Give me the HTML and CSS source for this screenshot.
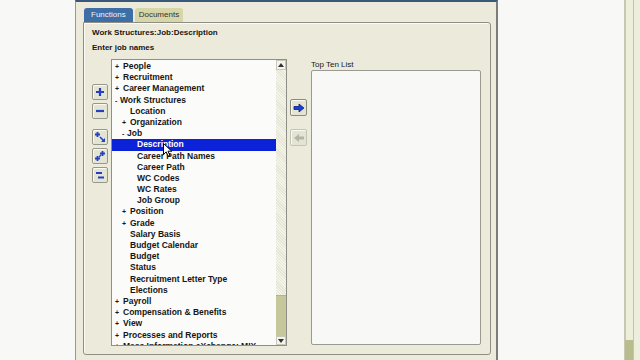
FILE: index.html
```html
<!DOCTYPE html>
<html lang="en">

<head>
  <meta charset="UTF-8">
  <title>Work Structures: Job: Description</title>
  <link rel="stylesheet" href="styles.css">
</head>

<body>
  <div class="gutter"></div>

  <div class="window">
    <div class="tabs">
      <div class="tab tab-active">Functions</div>
      <div class="tab">Documents</div>
    </div>

    <div class="tabpanel">
      <div class="title">Work Structures:Job:Description</div>
      <div class="prompt">Enter job names</div>

      <div class="picker">
        <div class="tools">
          <div class="tool">
            <svg width="10" height="10" viewBox="0 0 10 10"><path d="M5 1v8M1 5h8" stroke="#2340c4" stroke-width="2.2"/></svg>
          </div>
          <div class="tool">
            <svg width="10" height="10" viewBox="0 0 10 10"><path d="M1 5h8" stroke="#2340c4" stroke-width="2.2"/></svg>
          </div>
          <div class="tool tool-gap">
            <svg width="12" height="12" viewBox="0 0 12 12"><path d="M3.5 1v5M1 3.5h5" stroke="#2340c4" stroke-width="1.8"/><path d="M6 6l3.5 3.5" stroke="#2340c4" stroke-width="1.6"/><path d="M11 7v4H7z" fill="#2340c4"/></svg>
          </div>
          <div class="tool">
            <svg width="12" height="12" viewBox="0 0 12 12"><path d="M3.5 6v5M1 8.5h5M8.5 1v5M6 3.5h5" stroke="#2340c4" stroke-width="1.8"/><path d="M5 7l2-2" stroke="#2340c4" stroke-width="1.2"/></svg>
          </div>
          <div class="tool">
            <svg width="12" height="12" viewBox="0 0 12 12"><path d="M2 4h6M4 8.5h6" stroke="#2340c4" stroke-width="2"/></svg>
          </div>
        </div>

        <div class="tree">
          <ul class="nodes">
            <li class="l0"><span class="plus">+</span>People</li>
            <li class="l0"><span class="plus">+</span>Recruitment</li>
            <li class="l0"><span class="plus">+</span>Career Management</li>
            <li class="l0"><span class="minus">-</span>Work Structures</li>
            <li class="l1 leaf">Location</li>
            <li class="l1"><span class="plus">+</span>Organization</li>
            <li class="l1"><span class="minus">-</span>Job</li>
            <li class="l2 leaf selected">Description</li>
            <li class="l2 leaf">Career Path Names</li>
            <li class="l2 leaf">Career Path</li>
            <li class="l2 leaf">WC Codes</li>
            <li class="l2 leaf">WC Rates</li>
            <li class="l2 leaf">Job Group</li>
            <li class="l1"><span class="plus">+</span>Position</li>
            <li class="l1"><span class="plus">+</span>Grade</li>
            <li class="l1 leaf">Salary Basis</li>
            <li class="l1 leaf">Budget Calendar</li>
            <li class="l1 leaf">Budget</li>
            <li class="l1 leaf">Status</li>
            <li class="l1 leaf">Recruitment Letter Type</li>
            <li class="l1 leaf">Elections</li>
            <li class="l0"><span class="plus">+</span>Payroll</li>
            <li class="l0"><span class="plus">+</span>Compensation &amp; Benefits</li>
            <li class="l0"><span class="plus">+</span>View</li>
            <li class="l0"><span class="plus">+</span>Processes and Reports</li>
            <li class="l0"><span class="plus">+</span>Mass Information eXchange: MIX</li>
          </ul>
          <div class="scrollbar">
            <div class="scroll-btn">
              <svg width="6" height="4" viewBox="0 0 6 4"><path d="M0 4L3 0l3 4z" fill="#333"/></svg>
            </div>
            <div class="track"></div>
            <div class="thumb"></div>
            <div class="scroll-btn scroll-btn-down">
              <svg width="6" height="4" viewBox="0 0 6 4"><path d="M0 0h6L3 4z" fill="#333"/></svg>
            </div>
          </div>
          <svg class="cursor" width="10" height="14" viewBox="0 0 10 14"><path d="M.5.5v11l2.7-2.6 1.9 4.3 1.8-.8-1.9-4.2h3.8z" fill="#fff" stroke="#000" stroke-width="1"/></svg>
        </div>

        <div class="moves">
          <div class="move">
            <svg width="12" height="10" viewBox="0 0 12 10"><path d="M1 3.5h5V1l5 4-5 4V6.5H1z" fill="#1b3fd0" stroke="#0c1f80" stroke-width=".8"/></svg>
          </div>
          <div class="move move-off">
            <svg width="12" height="10" viewBox="0 0 12 10"><path d="M11 3.5H6V1L1 5l5 4V6.5h5z" fill="#b4b4a8"/></svg>
          </div>
        </div>

        <div class="top-ten">
          <div class="label">Top Ten List</div>
          <div class="list"></div>
        </div>
      </div>
    </div>
  </div>

  <div class="blank"></div>

  <div class="edge">
    <div class="edge-thumb"></div>
  </div>
</body>

</html>
```

FILE: styles.css
```css
html {
  margin: 0;
  padding: 0;
  background: #f8f8f6;
}

body {
  display: flex;
  height: 360px;
  margin: 0;
  overflow: hidden;
  font-family: "Liberation Sans", Arial, sans-serif;
  color: #161616;
}

.gutter {
  width: 75px;
  flex: none;
}

.window {
  width: 413px;
  flex: none;
  height: 353px;
  padding: 6px 0 0 7px;
  background: #ecebdb;
  border-top: 2px solid #3a5878;
  border-left: 1px solid #9a9a8c;
  border-right: 2px solid #7c7c78;
  border-bottom: 1px solid #a8a89a;
}

.tabs {
  display: flex;
  gap: 2px;
  margin-left: 1px;
}

.tab {
  height: 14px;
  line-height: 14px;
  padding: 0 4px;
  font-size: 8px;
  color: #333;
  background: #d6d6a8;
  border-radius: 3px 3px 0 0;
}

.tab-active {
  padding: 0 7px;
  color: #eef2fa;
  background: #3d6ea6;
}

.tabpanel {
  width: 408px;
  height: 333px;
  padding: 4px 0 0 8px;
  box-sizing: border-box;
  border: 1px solid #8e8e84;
  border-radius: 0 3px 3px 3px;
  box-shadow: inset 1px 1px #fbfbf4;
}

.title,
.prompt {
  font-size: 8px;
  font-weight: bold;
  line-height: 12px;
}

.prompt {
  margin-top: 3px;
}

.picker {
  display: flex;
  align-items: flex-start;
  margin-top: 5px;
}

.tools {
  display: flex;
  flex-direction: column;
  gap: 3px;
  width: 16px;
  margin-right: 3px;
  padding-top: 25px;
}

.tool,
.move {
  display: flex;
  align-items: center;
  justify-content: center;
  box-sizing: border-box;
  width: 16px;
  height: 16px;
  background: #e4e4d2;
  border: 1px solid #98988a;
  border-radius: 2px;
  box-shadow: inset 1px 1px #fafaf2;
}

.tool-gap {
  margin-top: 7px;
}

.tree {
  position: relative;
  display: flex;
  width: 176px;
  height: 287px;
  box-sizing: border-box;
  border: 1px solid #8f8f86;
  background: #fbfbfa;
  overflow: hidden;
}

.nodes {
  flex: 1;
  margin: 0;
  padding: 1px 0 0;
  list-style: none;
  font-size: 8.5px;
  font-weight: bold;
  overflow: hidden;
}

.nodes li {
  height: 11.2px;
  line-height: 11.2px;
  white-space: nowrap;
}

.plus,
.minus {
  display: inline-block;
  font-size: 7px;
}

.plus {
  width: 8px;
}

.minus {
  width: 5px;
}

.l0 {
  padding-left: 3px;
}

.l1 {
  padding-left: 10px;
}

.l1.leaf {
  padding-left: 18px;
}

.l2.leaf {
  padding-left: 25px;
}

.selected {
  background: #0b22d8;
  color: #fff;
}

.scrollbar {
  display: flex;
  flex-direction: column;
  width: 10px;
  flex: none;
  background: #f2f2e6;
}

.scroll-btn {
  display: flex;
  align-items: center;
  justify-content: center;
  height: 10px;
  background: #f4f4ec;
  border: 1px solid #c8c8b8;
  box-sizing: border-box;
}

.scroll-btn-down {
  height: 9px;
}

.track {
  flex: 1;
  background: repeating-linear-gradient(45deg, #f4f4ea 0 1px, #e6e6d6 1px 2px);
}

.thumb {
  height: 40px;
  background: #c6c89c;
  border-top: 1px solid #b2b488;
}

.cursor {
  position: absolute;
  left: 51px;
  top: 83px;
}

.moves {
  display: flex;
  flex-direction: column;
  gap: 13px;
  width: 17px;
  margin: 0 4px 0 3px;
  padding-top: 40px;
}

.move {
  width: 17px;
  height: 17px;
  border-color: #8a8a80;
}

.move-off {
  border-color: #c4c4b6;
}

.top-ten {
  width: 170px;
}

.label {
  font-size: 8px;
  line-height: 11px;
}

.list {
  height: 275px;
  box-sizing: border-box;
  border: 1px solid #9a9a90;
  border-radius: 2px;
  background: #f8f8f6;
}

.blank {
  flex: 1;
}

.edge {
  display: flex;
  flex-direction: column;
  justify-content: flex-end;
  width: 16px;
  flex: none;
  background: linear-gradient(to right, #c8c8b2 0 2px, #eeeedc 2px 9px, #c4c4ae 9px 10px, #eeeedc 10px);
}

.edge-thumb {
  width: 8px;
  height: 20px;
  margin-left: 1px;
  background: #b9bc8c;
}
```
